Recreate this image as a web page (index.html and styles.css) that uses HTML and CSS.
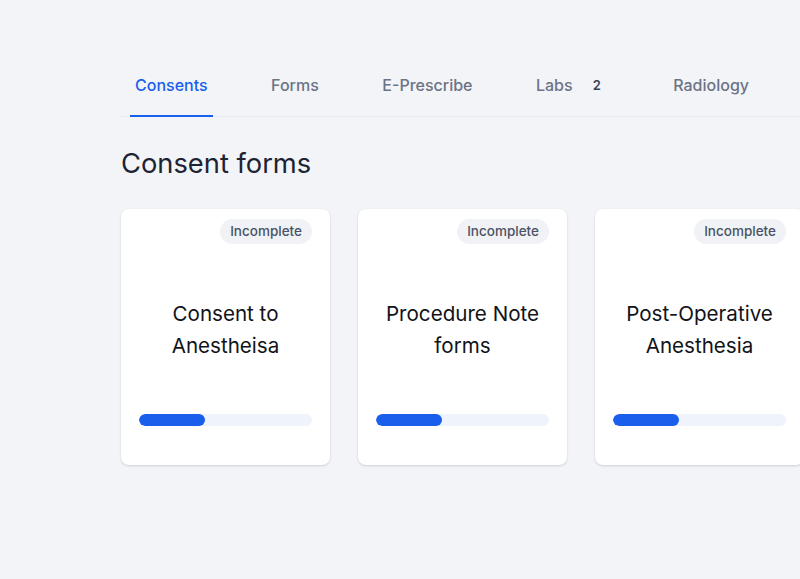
FILE: index.html
```html
<!DOCTYPE html>
<html lang="en">
<head>
<meta charset="utf-8">
<title>Consent forms</title>
<link rel="stylesheet" href="styles.css">
</head>
<body>
<main class="page">
  <nav class="tabs">
    <a class="tab tab-active">Consents</a>
    <a class="tab">Forms</a>
    <a class="tab">E-Prescribe</a>
    <a class="tab">Labs<span class="count">2</span></a>
    <a class="tab">Radiology</a>
  </nav>
  <h1 class="heading">Consent forms</h1>
  <section class="cards">
    <article class="card">
      <span class="badge">Incomplete</span>
      <h2 class="card-title">Consent to<br>Anestheisa</h2>
      <div class="bar"><div class="bar-fill" style="width:38%"></div></div>
    </article>
    <article class="card">
      <span class="badge">Incomplete</span>
      <h2 class="card-title">Procedure Note<br>forms</h2>
      <div class="bar"><div class="bar-fill" style="width:38%"></div></div>
    </article>
    <article class="card">
      <span class="badge">Incomplete</span>
      <h2 class="card-title">Post-Operative<br>Anesthesia</h2>
      <div class="bar"><div class="bar-fill" style="width:38%"></div></div>
    </article>
  </section>
</main>
</body>
</html>
```
FILE: styles.css
```css
html, body {
  margin: 0;
  padding: 0;
  background: #f2f4f8;
  overflow: hidden;
}
body {
  font-family: Inter, "Noto Sans", "Liberation Sans", sans-serif;
  width: 800px;
  height: 579px;
}
.page {
  padding: 64px 0 0 121px;
}
.tabs {
  display: flex;
  gap: 53.5px;
  padding-left: 9px;
  border-bottom: 1px solid #e6e8ee;
}
.tab {
  display: flex;
  align-items: center;
  padding: 11px 5px 20px;
  line-height: 20px;
  font-size: 16px;
  font-weight: 500;
  color: #6b7385;
  border-bottom: 2px solid transparent;
  margin-bottom: -1px;
}
.tab-active {
  color: #1a5fec;
  border-bottom-color: #1a5fec;
}
.count {
  margin-left: 11px;
  padding: 0 9px;
  font-size: 13px;
  font-weight: 600;
  color: #384152;
}
.heading {
  margin: 29px 0 27px;
  font-size: 27.3px;
  line-height: 36px;
  font-weight: 400;
  color: #1c2333;
}
.cards {
  display: flex;
  gap: 28px;
}
.card {
  flex: 0 0 209px;
  box-sizing: border-box;
  height: 256px;
  background: #ffffff;
  border-radius: 8px;
  box-shadow: 0 1px 3px rgba(16, 24, 40, 0.10), 0 1px 2px rgba(16, 24, 40, 0.06);
  padding: 10px 18px 39px;
  display: flex;
  flex-direction: column;
}
.badge {
  align-self: flex-end;
  height: 25px;
  line-height: 25px;
  padding: 0 10px;
  border-radius: 13px;
  background: #f0f2f6;
  color: #4a5264;
  font-size: 13.5px;
  font-weight: 500;
}
.card-title {
  margin: 54px 0 0;
  height: 64px;
  font-size: 20.6px;
  line-height: 32px;
  font-weight: 400;
  text-align: center;
  color: #111318;
}
.bar {
  margin-top: 52px;
  height: 12px;
  border-radius: 6px;
  background: #eef3fc;
  overflow: hidden;
}
.bar-fill {
  height: 100%;
  border-radius: 6px;
  background: #1a5fec;
}
```
